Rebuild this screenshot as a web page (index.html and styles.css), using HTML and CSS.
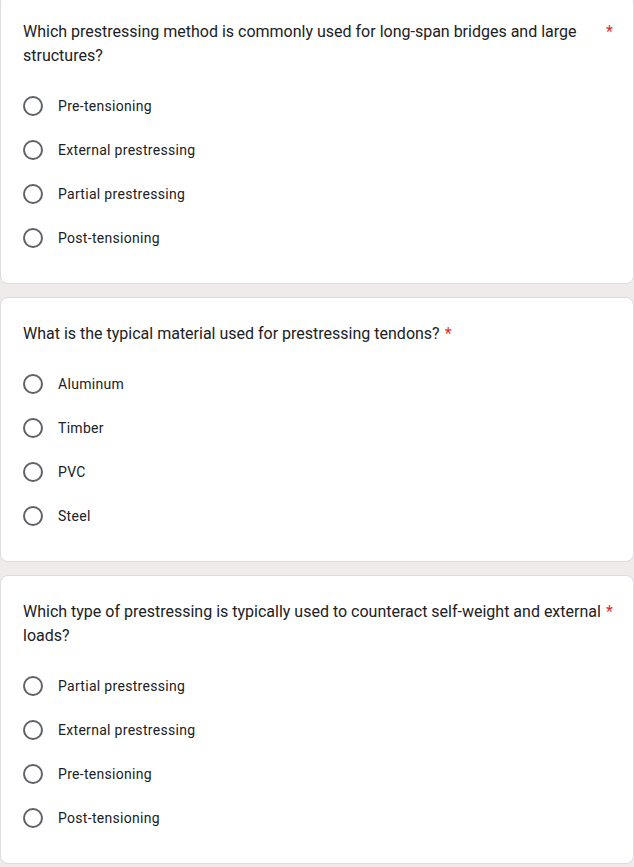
FILE: index.html
```html
<!DOCTYPE html>
<html>
<head>
<meta charset="utf-8">
<link rel="stylesheet" href="styles.css">
</head>
<body>
<div class="page">
  <div class="card first">
    <div class="qtitle"><div class="qtext">Which prestressing method is commonly used for long-span bridges and large structures?</div><span class="req">*</span></div>
    <div class="opts">
      <div class="opt"><span class="radio"></span><span class="label">Pre-tensioning</span></div>
      <div class="opt"><span class="radio"></span><span class="label">External prestressing</span></div>
      <div class="opt"><span class="radio"></span><span class="label">Partial prestressing</span></div>
      <div class="opt"><span class="radio"></span><span class="label">Post-tensioning</span></div>
    </div>
  </div>
  <div class="card">
    <div class="qtitle"><div class="qtext">What is the typical material used for prestressing tendons?</div><span class="req">*</span></div>
    <div class="opts">
      <div class="opt"><span class="radio"></span><span class="label">Aluminum</span></div>
      <div class="opt"><span class="radio"></span><span class="label">Timber</span></div>
      <div class="opt"><span class="radio"></span><span class="label">PVC</span></div>
      <div class="opt"><span class="radio"></span><span class="label">Steel</span></div>
    </div>
  </div>
  <div class="card">
    <div class="qtitle"><div class="qtext">Which type of prestressing is typically used to counteract self-weight and external loads?</div><span class="req">*</span></div>
    <div class="opts">
      <div class="opt"><span class="radio"></span><span class="label">Partial prestressing</span></div>
      <div class="opt"><span class="radio"></span><span class="label">External prestressing</span></div>
      <div class="opt"><span class="radio"></span><span class="label">Pre-tensioning</span></div>
      <div class="opt"><span class="radio"></span><span class="label">Post-tensioning</span></div>
    </div>
  </div>
</div>
</body>
</html>
```
FILE: styles.css
```css
html, body {
  margin: 0;
  padding: 0;
  background: #efebeb;
}
body {
  font-family: Roboto, "Liberation Sans", Arial, sans-serif;
  color: #202124;
}
.page {
  display: flex;
  flex-direction: column;
  gap: 13px;
  width: 634px;
}
.card {
  background: #fff;
  border: 1px solid #dadce0;
  border-radius: 8px;
  padding: 24px 20px 23px 22px;
  box-sizing: border-box;
  width: 634px;
}
.card.first {
  margin-top: -5px;
}
.qtitle {
  display: flex;
  align-items: flex-start;
  font-size: 16px;
  line-height: 24px;
  letter-spacing: 0;
}
.qtext {
  flex: 0 1 auto;
}
.req {
  flex: 0 0 auto;
  color: #d93025;
  padding-left: 5px;
}
.opts {
  display: flex;
  flex-direction: column;
  margin-top: 16px;
}
.opt {
  display: flex;
  align-items: center;
  height: 44px;
  font-size: 14px;
  letter-spacing: 0.3px;
}
.radio {
  width: 20px;
  height: 20px;
  box-sizing: border-box;
  border: 2px solid #5f6368;
  border-radius: 50%;
  flex: 0 0 auto;
}
.label {
  margin-left: 15px;
}
```
